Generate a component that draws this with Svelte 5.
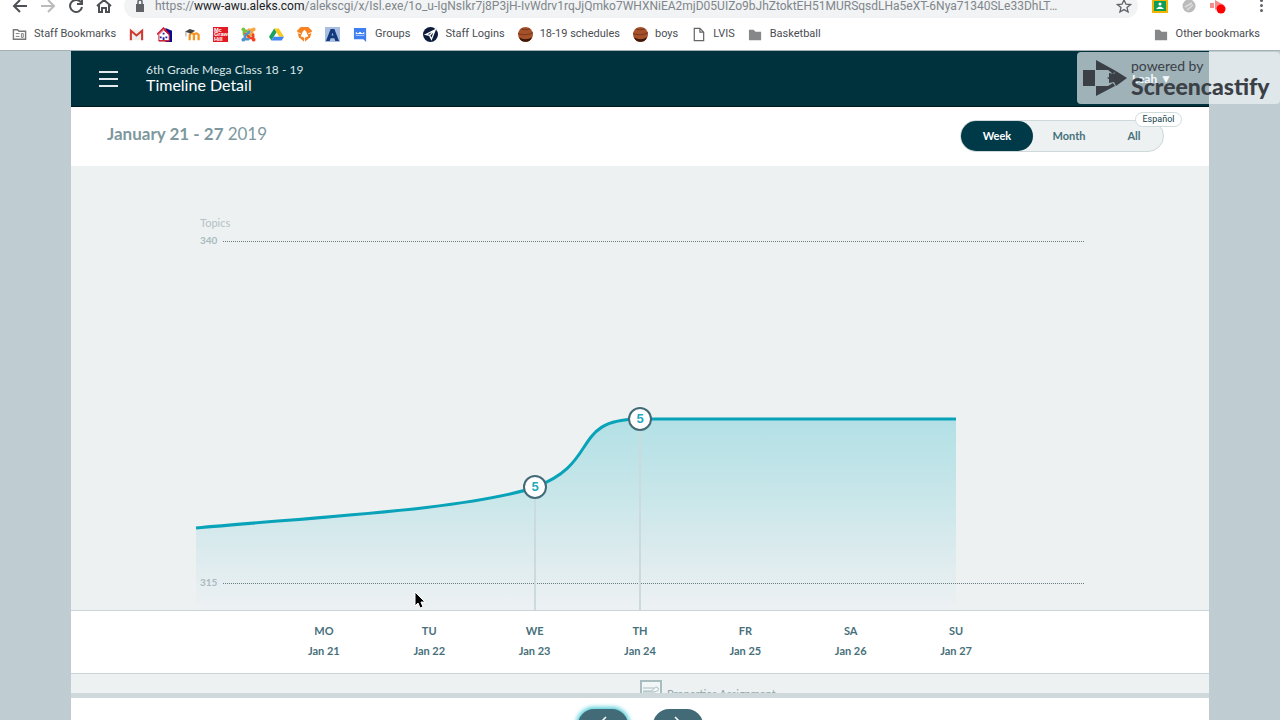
<script lang="ts">
	interface Bookmark {
		icon: string;
		label?: string;
		title: string;
	}

	const url = {
		scheme: 'https://',
		host: 'www-awu.aleks.com',
		path: '/alekscgi/x/Isl.exe/1o_u-IgNsIkr7j8P3jH-IvWdrv1rqJjQmko7WHXNiEA2mjD05UIZo9bJhZtoktEH51MURSqsdLHa5eXT-6Nya71340SLe33DhLT…'
	};

	const bookmarks: Bookmark[] = [
		{ icon: 'managed', label: 'Staff Bookmarks', title: 'Staff Bookmarks' },
		{ icon: 'gmail', title: 'Gmail' },
		{ icon: 'house', title: 'School' },
		{ icon: 'moodle', title: 'Moodle' },
		{ icon: 'mcgraw', title: 'McGraw Hill' },
		{ icon: 'joomla', title: 'Joomla' },
		{ icon: 'drive', title: 'Drive' },
		{ icon: 'shield', title: 'Brave' },
		{ icon: 'aleks', title: 'ALEKS' },
		{ icon: 'groups', label: 'Groups', title: 'Groups' },
		{ icon: 'logins', label: 'Staff Logins', title: 'Staff Logins' },
		{ icon: 'ball', label: '18-19 schedules', title: '18-19 schedules' },
		{ icon: 'ball', label: 'boys', title: 'boys' },
		{ icon: 'page', label: 'LVIS', title: 'LVIS' },
		{ icon: 'folder', label: 'Basketball', title: 'Basketball' }
	];

	const ranges = ['Week', 'Month', 'All'];
	let range = $state('Week');

	const days = [
		{ name: 'MO', date: 'Jan 21' },
		{ name: 'TU', date: 'Jan 22' },
		{ name: 'WE', date: 'Jan 23' },
		{ name: 'TH', date: 'Jan 24' },
		{ name: 'FR', date: 'Jan 25' },
		{ name: 'SA', date: 'Jan 26' },
		{ name: 'SU', date: 'Jan 27' }
	];

	const gridLines = [
		{ value: 340, y: 75 },
		{ value: 315, y: 417 }
	];

	const points = [
		{ x: 464, y: 321, topics: 5 },
		{ x: 569, y: 253, topics: 5 }
	];

	const curve = 'M125 362 C245 351 402 343 464 321 C530 297 499 253 569 253 H885';
</script>

{#snippet icon(name: string)}
	<svg class="icon" viewBox="0 0 16 16" aria-hidden="true">
		{#if name === 'managed'}
			<path d="M1.500 3h4.500l1.500 1.500h7V13h-13z" fill="none" stroke="#777" stroke-width="1.500" />
			<path d="M4 7h4M4 10h4M10 7h2v4h-2z" stroke="#777" fill="none" />
		{:else if name === 'gmail'}
			<path d="M1 3h14v11H1z" fill="#eee" />
			<path d="M2 14V4l6 5 6-5v10" fill="none" stroke="#cf3a30" stroke-width="2.200" />
		{:else if name === 'house'}
			<path d="M9 1l7 3v12H9z" fill="#0a0a8c" />
			<path d="M2 8l5-5 6 5v7H2z" fill="#fff" stroke="#c4172c" stroke-width="1" />
			<path d="M0 8l7-7 6 7" fill="none" stroke="#d3122b" stroke-width="1.500" />
			<path d="M6 6h2v2H6zM3 10h2v2H3zm6 0h2v2H9zM6 11h2v3H6z" fill="#23239a" />
			<path d="M2 14.500h11" stroke="#c4172c" />
		{:else if name === 'moodle'}
			<path d="M5 14V8.500Q7 5 9.500 8v6M9.500 8.500Q12 5 14.500 8.500V14" fill="none" stroke="#f7931e" stroke-width="2.400" />
			<path d="M0 5l5-3 6 2-5 3z" fill="#444" />
			<path d="M1 5v5" stroke="#999" />
		{:else if name === 'mcgraw'}
			<path d="M0 0h16v16H0z" fill="#e21a23" />
			<g fill="#fff" font-family="Liberation Sans, sans-serif" font-size="6" font-weight="bold">
				<text x="1" y="5">Mc</text>
				<text x="1" y="10">Graw</text>
				<text x="1" y="15">Hill</text>
			</g>
		{:else if name === 'joomla'}
			<g fill="none" stroke-width="2.600" stroke-linecap="round">
				<path d="M3 8V5q2-2 4 0l4 4" stroke="#7ac143" />
				<path d="M8 3h3q2 2 0 4l-4 4" stroke="#f9a541" />
				<path d="M13 8v3q-2 2-4 0L5 7" stroke="#f44321" />
				<path d="M8 13H5q-2-2 0-4l4-4" stroke="#5091cd" />
			</g>
			<circle cx="2.500" cy="2.500" r="2" fill="#7ac143" />
			<circle cx="13.500" cy="2.500" r="2" fill="#f9a541" />
			<circle cx="13.500" cy="13.500" r="2" fill="#f44321" />
			<circle cx="2.500" cy="13.500" r="2" fill="#5091cd" />
		{:else if name === 'drive'}
			<path d="M5.500 1.500h5L16 10.500h-5z" fill="#fbc918" />
			<path d="M5.500 1.500L0 10.500l2.500 4L8 5.500z" fill="#1aa15f" />
			<path d="M5 10.500h11l-2.500 4h-11z" fill="#4285f4" />
		{:else if name === 'shield'}
			<path d="M4 0h8l4 4-2 7-6 5-6-5-2-7z" fill="#f7821f" />
			<path d="M8 3l2 2 2 5-3 1-1 2-1-2-3-1 2-5z" fill="#fff" />
			<path d="M0 6l4 1M16 6l-4 1M8 16v-3" stroke="#fff" />
		{:else if name === 'aleks'}
			<path d="M0 0h16v16H0z" fill="#a9bde0" />
			<path d="M1 15L6 2h4l5 13h-4l-1-3H6l-1 3zM7 9h2L8 6z" fill="#123a7d" />
		{:else if name === 'groups'}
			<path d="M1 1h13v15l-3-3H1z" fill="#3f7ef0" />
			<path d="M3 9V5l2 2 2.500-2L10 7l2-2v4z" fill="#fff" />
			<path d="M3 8h9" stroke="#3f7ef0" />
		{:else if name === 'logins'}
			<circle cx="8" cy="8" r="8" fill="#0c1c3d" />
			<path d="M13 3L3 8l4 1 2 4zM7 9l6-6" fill="none" stroke="#fff" stroke-width="1.400" />
		{:else if name === 'ball'}
			<circle cx="8" cy="8" r="8" fill="#a5512a" />
			<path d="M1 11a7.500 7.500 0 0 0 14 0q-7 4-14 0z" fill="#3d1709" />
			<path d="M0 7q8 3 16-1M3 2q4 2 10 0" fill="none" stroke="#74351a" />
		{:else if name === 'page'}
			<path d="M3.500 1.500h6l4 4v9h-10zM9.500 1.500v4h4" fill="none" stroke="#666" stroke-width="1.300" />
		{:else}
			<path d="M1 3h5l2 2h6v9H1z" fill="#858789" />
		{/if}
	</svg>
{/snippet}

<div class="screen">
	<header class="toolbar">
		<button class="nav" aria-label="Back">
			<svg viewBox="0 0 16 16"><path d="M15 8H2M8 2L2 8l6 6" /></svg>
		</button>
		<button class="nav off" aria-label="Forward" disabled>
			<svg viewBox="0 0 16 16"><path d="M1 8h13M8 2l6 6-6 6" /></svg>
		</button>
		<button class="nav" aria-label="Reload">
			<svg viewBox="0 0 16 16"><path d="M13 4.500A6 6 0 1 0 14 9M14 1v5H9" /></svg>
		</button>
		<button class="nav" aria-label="Home">
			<svg viewBox="0 0 16 16"><path d="M1 8l7-6 7 6M3 7v7h3v-4h4v4h3V7" /></svg>
		</button>
		<div class="address">
			<svg class="lock" viewBox="0 0 10 14" aria-hidden="true">
				<path d="M1 5h8v8H1z" fill="#5f6368" />
				<path d="M3 5V3a2 2 0 0 1 4 0v2" fill="none" stroke="#5f6368" stroke-width="1.500" />
			</svg>
			<span class="url">{url.scheme}<b>{url.host}</b>{url.path}</span>
			<svg class="star" viewBox="0 0 16 16" aria-hidden="true">
				<path d="M8 2l2 4.200 4.500.4-3.500 3 1.100 4.400L8 11.600 3.900 14 5 9.600l-3.500-3L6 6.200z" fill="none" stroke="#5f6368" stroke-width="1.300" />
			</svg>
		</div>
		<div class="extensions">
			<svg viewBox="0 0 16 16" aria-hidden="true">
				<path d="M1 2h14v12H1z" fill="#0f9d58" stroke="#f4b400" stroke-width="2" />
				<circle cx="8" cy="6" r="1.500" fill="#fff" />
				<path d="M4 11q4-5 8 0z" fill="#fff" />
			</svg>
			<svg viewBox="0 0 16 16" aria-hidden="true">
				<circle cx="8" cy="8" r="6.500" fill="#bbb" />
				<path d="M4 9l7-4M6 12l6-5" stroke="#ddd" stroke-width="1.500" />
			</svg>
			<svg viewBox="0 0 16 16" aria-hidden="true">
				<path d="M0 5h4v5H0zM5 2l9 5-9 5z" fill="#f58b8b" />
				<circle cx="11" cy="11" r="4.500" fill="#f00" />
			</svg>
		</div>
		<button class="menu" aria-label="Browser menu"><i></i><i></i><i></i></button>
	</header>

	<nav class="bookmarks" aria-label="Bookmarks">
		{#each bookmarks as mark}
			<a href="#top" aria-label={mark.title}>
				{@render icon(mark.icon)}
				{#if mark.label}<span>{mark.label}</span>{/if}
			</a>
		{/each}
		<a class="other" href="#top">
			{@render icon('folder')}
			<span>Other bookmarks</span>
		</a>
	</nav>

	<main>
		<div class="page">
			<div class="title-bar">
				<button class="burger" aria-label="Menu"><i></i><i></i><i></i></button>
				<div class="titles">
					<div class="class-name">6th Grade Mega Class 18 - 19</div>
					<h1>Timeline Detail</h1>
				</div>
				<button class="user">Leah <span>▼</span></button>
			</div>

			<div class="period">
				<h2>January 21 - 27 <span>2019</span></h2>
				<div class="ranges">
					{#each ranges as r}
						<button class:active={range === r} onclick={() => (range = r)}>{r}</button>
					{/each}
					<button class="language">Español</button>
				</div>
			</div>

			<svg class="chart" viewBox="0 0 1138 444" role="img" aria-label="Topics per day">
				<defs>
					<linearGradient id="fill" x1="0" y1="253" x2="0" y2="444" gradientUnits="userSpaceOnUse">
						<stop offset="0" stop-color="#b2e0e6" />
						<stop offset="0.4" stop-color="#c8e6e9" />
						<stop offset="0.7" stop-color="#dcebee" />
						<stop offset="1" stop-color="#edf1f3" />
					</linearGradient>
				</defs>
				<path d="{curve} V444 H125 Z" fill="url(#fill)" />
				<text class="axis" x="129" y="61">Topics</text>
				{#each gridLines as line}
					<text class="axis value" x="129" y={line.y + 3}>{line.value}</text>
					<path class="grid-line" d="M152 {line.y}.500H1013" />
				{/each}
				{#each points as p}
					<path class="drop" d="M{p.x} {p.y}V444" />
				{/each}
				<path class="curve" d={curve} />
				{#each points as p}
					<circle class="point" cx={p.x} cy={p.y} r="11" />
					<text class="count" x={p.x} y={p.y + 4}>{p.topics}</text>
				{/each}
			</svg>

			<div class="days">
				{#each days as day}
					<div class="day">
						<span>{day.name}</span>
						<span>{day.date}</span>
					</div>
				{/each}
			</div>

			<div class="legend">
				<svg viewBox="0 0 22 22" aria-hidden="true">
					<path d="M1 1h20v20H1z" fill="#f3f6f6" stroke="#a9bcc0" stroke-width="2" />
					<path d="M3 8h11M3 11h9q4-6 6-3t-4 4H3" fill="none" stroke="#a9bcc0" />
				</svg>
				<span>Properties Assignment</span>
			</div>

			<footer>
				<button class="step focused" aria-label="Previous">
					<svg viewBox="0 0 16 16"><path d="M11 1L4 8l7 7" /></svg>
				</button>
				<button class="step" aria-label="Next">
					<svg viewBox="0 0 16 16"><path d="M5 1l7 7-7 7" /></svg>
				</button>
			</footer>
		</div>

		<div class="watermark">
			<svg viewBox="0 0 44 36" aria-hidden="true">
				<path d="M0 10h12v16H0zM13 0l20 11-3 3-5-4H13zM13 36V26h12l5-3 2 3zM33 11l11 7-11 8-2-4-5 1v-4l-2-1 2-1v-4l5 1z" fill="#3b4047" />
			</svg>
			<div>
				<span>powered by</span>
				<strong>Screencastify</strong>
			</div>
		</div>
	</main>

	<svg class="cursor" viewBox="0 0 12 18" aria-hidden="true">
		<path d="M1 1v14l3-3 2 5 3-1-2-5h4z" fill="#000" stroke="#fff" />
	</svg>
</div>

<style>
	:global(body) {
		margin: 0;
	}

	.screen {
		position: relative;
		display: flex;
		flex-direction: column;
		height: 100vh;
		overflow: hidden;
		background: #fff;
		font-family: Lato, 'Open Sans', sans-serif;
	}

	button {
		margin: 0;
		padding: 0;
		border: 0;
		background: none;
		font: inherit;
		color: inherit;
		cursor: pointer;
	}

	/* Browser bars */
	.toolbar {
		display: flex;
		align-items: flex-end;
		flex: none;
		height: 18px;
		padding: 0 11px 0 12px;
		overflow: hidden;
		font-family: Roboto, sans-serif;
	}

	.nav,
	.menu {
		flex: none;
		display: flex;
		align-items: center;
		justify-content: center;
		height: 25px;
	}

	.nav {
		width: 16px;
		margin-right: 12px;
	}

	.nav svg {
		width: 16px;
		height: 16px;
		fill: none;
		stroke: #4d5054;
		stroke-width: 2;
	}

	.off svg {
		stroke: #b9bbbd;
	}

	.address {
		flex: 1;
		display: flex;
		align-items: center;
		min-width: 0;
		height: 24px;
		padding: 0 6px 0 11px;
		border-radius: 12px;
		background: #f1f3f4;
	}

	.lock {
		width: 10px;
		height: 14px;
		margin-right: 10px;
	}

	.url {
		flex: 1;
		min-width: 0;
		overflow: hidden;
		font-size: 12px;
		line-height: 16px;
		white-space: nowrap;
		color: #80868b;
	}

	.url b {
		font-weight: 400;
		color: #202124;
	}

	.star {
		width: 16px;
		height: 16px;
	}

	.extensions {
		display: flex;
		align-items: center;
		gap: 13px;
		height: 24px;
		padding: 0 27px 0 14px;
	}

	.extensions svg {
		width: 16px;
		height: 16px;
	}

	.menu {
		flex-direction: column;
		gap: 2px;
		width: 16px;
	}

	.menu i {
		width: 3px;
		height: 3px;
		border-radius: 50%;
		background: #5f6368;
	}

	.bookmarks {
		display: flex;
		align-items: center;
		flex: none;
		gap: 13px;
		height: 32px;
		padding: 0 20px 0 12px;
		border-bottom: 1px solid #a5b0b4;
		font-family: Roboto, sans-serif;
		font-size: 11px;
		line-height: 16px;
		white-space: nowrap;
		color: #4a4d51;
	}

	.bookmarks a {
		display: flex;
		align-items: center;
		gap: 7px;
		color: inherit;
		text-decoration: none;
	}

	.icon {
		width: 15px;
		height: 15px;
	}

	.bookmarks .other {
		margin-left: auto;
	}

	/* Page */
	main {
		position: relative;
		flex: 1;
		min-height: 0;
		padding: 0 71px;
		background: #bfccd1;
	}

	.page {
		display: flex;
		flex-direction: column;
		min-height: 100%;
		background: #fff;
	}

	.title-bar {
		display: flex;
		align-items: center;
		box-sizing: border-box;
		height: 56px;
		padding: 0 37px 0 28px;
		border-bottom: 1px solid #001a22;
		background: #00323e;
		color: #fff;
	}

	.burger {
		display: grid;
		gap: 5px;
		width: 19px;
		margin-right: 28px;
	}

	.burger i {
		height: 2px;
		background: #e5ebec;
	}

	.titles {
		padding-bottom: 2px;
	}

	.class-name {
		font-size: 12px;
		line-height: 14px;
		color: #dbe5e7;
	}

	h1 {
		margin: 0;
		font-size: 16px;
		font-weight: 400;
		line-height: 16px;
	}

	.user {
		margin-left: auto;
		font-size: 12px;
		font-weight: 700;
	}

	.period {
		display: flex;
		align-items: center;
		justify-content: space-between;
		height: 59px;
		padding: 0 45px 0 36px;
	}

	h2 {
		margin: 0 0 6px;
		font-size: 17px;
		line-height: 22px;
		color: #7d989e;
	}

	h2 span {
		font-weight: 400;
	}

	.ranges {
		position: relative;
		display: flex;
		box-sizing: border-box;
		height: 32px;
		margin-bottom: 1px;
		border: 1px solid #cfd8da;
		border-radius: 16px;
		background: #edf1f1;
		font-size: 11px;
		font-weight: 700;
		color: #47717c;
	}

	.ranges button {
		width: 58px;
		padding-bottom: 2px;
	}

	.ranges button:first-child,
	.ranges button:nth-child(2) {
		width: 72px;
	}

	.ranges .active {
		border-radius: 16px;
		background: #003947;
		color: #fff;
	}

	.ranges .language {
		position: absolute;
		top: -9px;
		right: -19px;
		width: 47px;
		height: 15px;
		padding: 0;
		border: 1px solid #cfdcdc;
		border-radius: 8px;
		background: #fff;
		font-family: Roboto, sans-serif;
		font-size: 9px;
		font-weight: 400;
		line-height: 13px;
		color: #123f4a;
	}

	.chart {
		display: block;
		width: 100%;
		background: #edf1f1;
	}

	.axis {
		font-size: 11px;
		fill: #b4c2c6;
	}

	.value {
		font-size: 10px;
		font-weight: 700;
		fill: #a9babf;
	}

	.grid-line {
		fill: none;
		stroke: #6b7c80;
		stroke-dasharray: 1 1;
	}

	.drop {
		stroke: #cddadd;
		stroke-width: 2;
	}

	.curve {
		fill: none;
		stroke: #09a3b9;
		stroke-width: 3;
	}

	.point {
		fill: #fff;
		stroke: #426b77;
		stroke-width: 2;
	}

	.count {
		font-family: Inter, sans-serif;
		font-size: 12px;
		font-weight: 700;
		text-anchor: middle;
		fill: #1da9bd;
	}

	.days {
		display: grid;
		grid-template-columns: 19fr repeat(7, 10fr) 19fr;
		border: 1px solid #cbd5d7;
		border-width: 1px 0;
		padding: 10px 0 12px;
		font-size: 11px;
		font-weight: 700;
		line-height: 20px;
		color: #47707b;
	}

	.day {
		display: flex;
		flex-direction: column;
		align-items: center;
	}

	.day:first-child {
		grid-column: 2;
	}

	.legend {
		display: flex;
		align-items: flex-start;
		gap: 5px;
		box-sizing: border-box;
		height: 24px;
		padding: 6px 0 0 50%;
		border-bottom: 5px solid #cfd8da;
		overflow: hidden;
		background: #edf1f1;
		font-size: 11px;
		line-height: 28px;
		color: #8fa6ac;
	}

	.legend svg {
		flex: none;
		width: 22px;
		height: 22px;
	}

	footer {
		display: flex;
		justify-content: center;
		gap: 25px;
		padding-top: 11px;
	}

	.step {
		width: 50px;
		height: 32px;
		border-radius: 16px;
		background: #426b77;
	}

	.step svg {
		width: 16px;
		height: 16px;
		fill: none;
		stroke: #fff;
		stroke-width: 1.5;
	}

	.focused {
		box-shadow: 0 0 4px 2px #55cdd8;
	}

	/* Recorder badge */
	.watermark {
		position: absolute;
		top: 1px;
		right: 0;
		display: flex;
		align-items: center;
		gap: 4px;
		box-sizing: border-box;
		width: 203px;
		height: 52px;
		padding-left: 6px;
		border-radius: 4px;
		background: rgb(240 244 248 / 66%);
		color: #3b4047;
	}

	.watermark svg {
		width: 44px;
		height: 36px;
	}

	.watermark span,
	.watermark strong {
		display: block;
	}

	.watermark span {
		font-size: 14px;
		line-height: 16px;
	}

	.watermark strong {
		font-size: 23px;
		font-weight: 900;
		line-height: 24px;
	}

	.cursor {
		position: absolute;
		top: 591px;
		left: 414px;
		width: 12px;
		height: 18px;
	}
</style>
